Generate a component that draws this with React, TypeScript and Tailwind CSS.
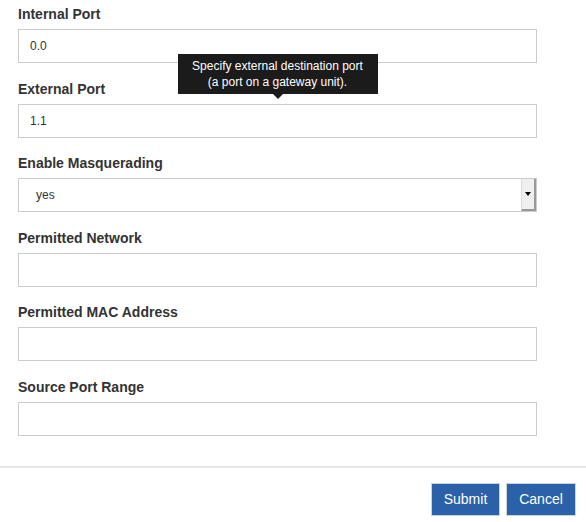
import { FC } from 'react';

const Field: FC<{ label: string; value?: string; tip?: boolean }> = ({ label, value, tip }) => (
  <div className="mb-[15.6px]">
    <label className="block h-5 leading-5 text-[14px] font-bold text-[#333]">{label}</label>
    <div className="relative mt-[5px]">
      {tip && (
        <div className="absolute left-1/2 -translate-x-1/2 bottom-[calc(100%+10px)] w-[200px] bg-[#1b1b1b] text-white text-[12px] leading-4 text-center py-[4px]">
          Specify external destination port
          <br />
          (a port on a gateway unit).
          <span className="absolute left-1/2 -translate-x-1/2 top-full w-0 h-0 border-l-[5px] border-r-[5px] border-t-[5px] border-l-transparent border-r-transparent border-t-[#1b1b1b]" />
        </div>
      )}
      <div className="h-[34px] border border-[#ccc] bg-white px-[11px] flex items-center text-[12px] text-[#333]">
        {value}
      </div>
    </div>
  </div>
);

const App: FC = () => {
  return (
    <div className="w-[586px] h-[522px] bg-white overflow-hidden" style={{ fontFamily: '"Liberation Sans", Arial, sans-serif' }}>
      <div className="pl-[18px] pr-[49px] pt-1 h-[466px]">
        <Field label="Internal Port" value="0.0" />
        <Field label="External Port" value="1.1" tip />
        <div className="mb-[15.6px]">
          <label className="block h-5 leading-5 text-[14px] font-bold text-[#333]">Enable Masquerading</label>
          <div className="mt-[5px] h-[34px] border border-[#ccc] bg-white flex items-stretch text-[12px] text-[#333]">
            <div className="flex-1 flex items-center pl-[17px]">yes</div>
            <div className="w-[15px] bg-[#efefef] border-l border-[#ddd] border-r-2 border-b-2 border-r-[#999] border-b-[#999] flex items-center justify-center">
              <span className="w-0 h-0 border-l-[3px] border-r-[3px] border-t-[4px] border-l-transparent border-r-transparent border-t-black" />
            </div>
          </div>
        </div>
        <Field label="Permitted Network" />
        <Field label="Permitted MAC Address" />
        <Field label="Source Port Range" />
      </div>
      <div className="border-t-2 border-[#e5e5e5] flex justify-end gap-[6px] pr-[10px] pt-[15px]">
        <button className="h-[33px] w-[69px] bg-[#2a61a8] border border-[#c9d3e0] text-white text-[14px]">Submit</button>
        <button className="h-[33px] w-[70px] bg-[#2a61a8] border border-[#c9d3e0] text-white text-[14px]">Cancel</button>
      </div>
    </div>
  );
};

export default App;
